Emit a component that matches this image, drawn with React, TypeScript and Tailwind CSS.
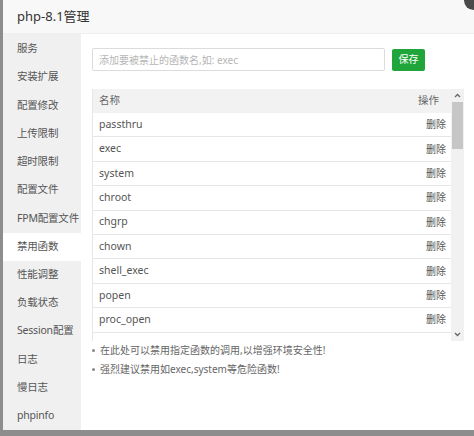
import React from "react";

const menu = [
  "服务",
  "安装扩展",
  "配置修改",
  "上传限制",
  "超时限制",
  "配置文件",
  "FPM配置文件",
  "禁用函数",
  "性能调整",
  "负载状态",
  "Session配置",
  "日志",
  "慢日志",
  "phpinfo",
];

const funcs = [
  "passthru",
  "exec",
  "system",
  "chroot",
  "chgrp",
  "chown",
  "shell_exec",
  "popen",
  "proc_open",
];

const font = { fontFamily: '"Noto Sans", "Noto Sans CJK SC", sans-serif' };

export default function App() {
  return (
    <div
      className="relative w-[474px] h-[436px] overflow-hidden bg-[#8d8d8d] pl-[3px] pb-[6px]"
      style={font}
    >
      <div className="relative flex h-full flex-col bg-white">
        {/* title bar */}
        <div className="flex h-[34px] shrink-0 items-center border-b border-[#eeeeee] bg-[#f8f8f8] pl-[14px] text-[13px] text-[#333]">
          php-8.1管理
        </div>
        <div className="absolute -right-[9px] -top-[9px] h-[19px] w-[19px] rounded-full bg-[#4a4a4a]" />

        <div className="flex min-h-0 flex-1">
          {/* sidebar */}
          <div className="flex w-[78px] shrink-0 flex-col bg-[#f0f0f0] pt-[1px]">
            {menu.map((m) => (
              <div
                key={m}
                className={`flex h-[28.7px] items-center whitespace-nowrap pl-[14px] text-[10.5px] tracking-[-0.2px] text-[#555] ${
                  m === "禁用函数" ? "bg-white" : ""
                }`}
              >
                {m}
              </div>
            ))}
          </div>

          {/* content */}
          <div className="flex flex-1 flex-col pl-[11px] pt-[14px]">
            <div className="flex items-center gap-[7px]">
              <input
                placeholder="添加要被禁止的函数名,如: exec"
                className="h-[23px] w-[293px] rounded-[2px] border border-[#dcdcdc] px-[6px] text-[10px] text-[#333] outline-none placeholder:text-[#b5b5b5]"
              />
              <button className="h-[22px] w-[33px] rounded-[2px] bg-[#20a53a] text-[10px] text-white">
                保存
              </button>
            </div>

            <div className="mt-[18px] flex h-[252px] w-[372px]">
              <div className="w-[359px] overflow-hidden border-l border-[#e6e6e6]">
                <div className="flex h-[24px] items-center justify-between bg-[#f2f2f2] pl-[6px] pr-[12px] text-[10.5px] text-[#666]">
                  <span>名称</span>
                  <span>操作</span>
                </div>
                {funcs.map((f) => (
                  <div
                    key={f}
                    className="flex h-[24.4px] items-center justify-between border-b border-[#e6e6e6] pl-[6px] pr-[5px] text-[10.5px] text-[#555]"
                  >
                    <span>{f}</span>
                    <span className="text-[10px] text-[#555]">删除</span>
                  </div>
                ))}
              </div>
              {/* scrollbar */}
              <div className="flex w-[13px] flex-col bg-[#f1f1f1]">
                <div className="flex h-[13px] items-center justify-center">
                  <svg width="7" height="5" viewBox="0 0 7 5">
                    <path d="M1 4 L3.5 1.5 L6 4" stroke="#666" strokeWidth="1.3" fill="none" />
                  </svg>
                </div>
                <div className="mx-[1px] h-[47px] bg-[#c6c6c6]" />
                <div className="flex-1" />
                <div className="flex h-[13px] items-center justify-center">
                  <svg width="7" height="5" viewBox="0 0 7 5">
                    <path d="M1 1 L3.5 3.5 L6 1" stroke="#666" strokeWidth="1.3" fill="none" />
                  </svg>
                </div>
              </div>
            </div>

            <ul className="mt-[2px] flex flex-col gap-[4px] text-[10px] text-[#666]">
              <li className="flex items-center gap-[5px]">
                <span className="h-[3px] w-[3px] rounded-full bg-[#888]" />
                在此处可以禁用指定函数的调用,以增强环境安全性!
              </li>
              <li className="flex items-center gap-[5px]">
                <span className="h-[3px] w-[3px] rounded-full bg-[#888]" />
                强烈建议禁用如exec,system等危险函数!
              </li>
            </ul>
          </div>
        </div>
      </div>
    </div>
  );
}
